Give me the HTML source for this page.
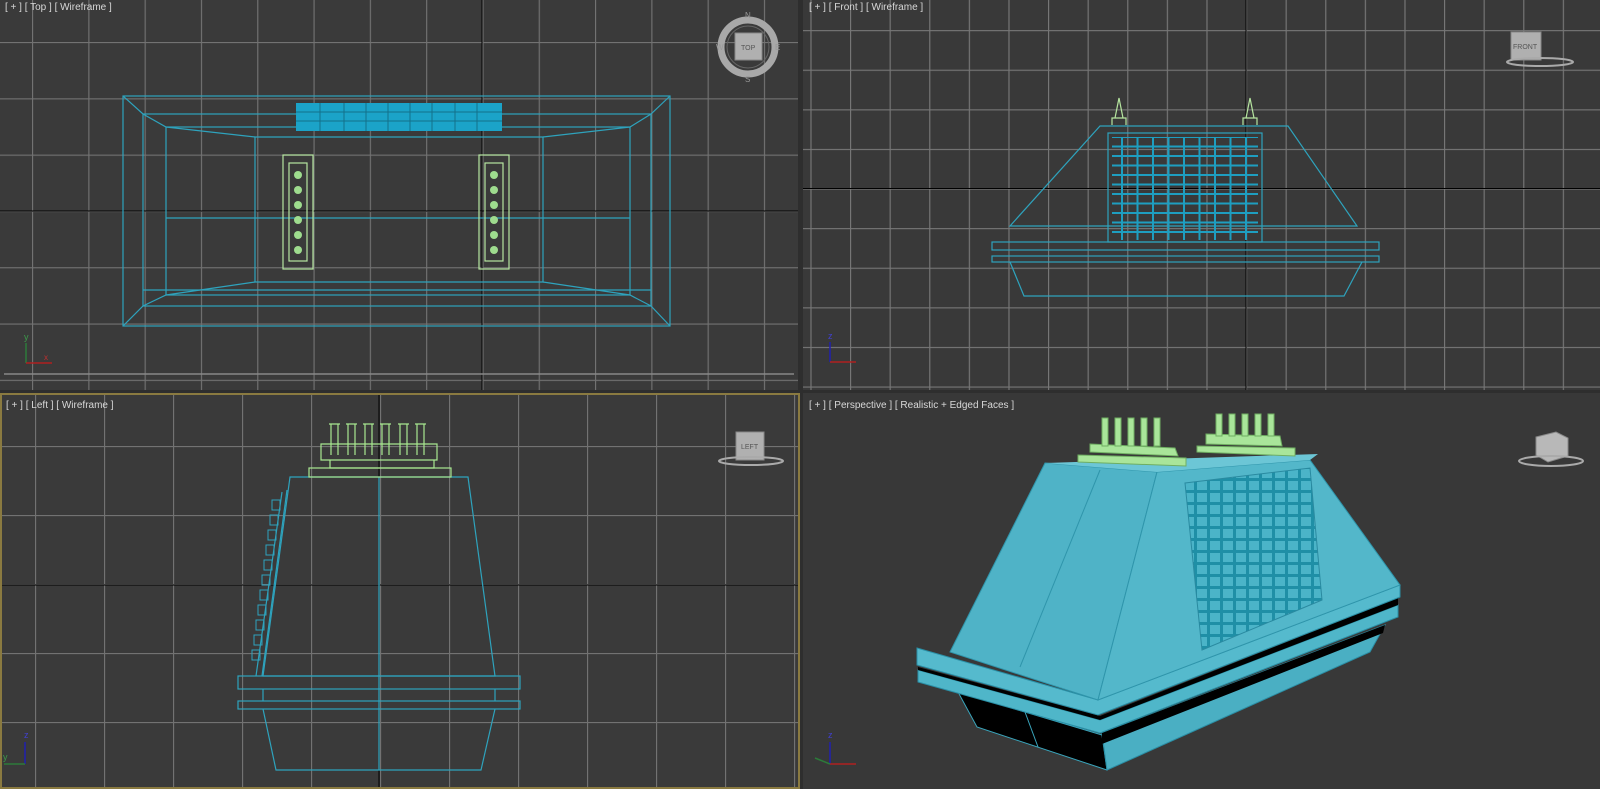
<!DOCTYPE html>
<html><head><meta charset="utf-8"><style>
html,body{margin:0;padding:0;background:#2e2e2e;width:1600px;height:789px;overflow:hidden}
svg{display:block}
text{font-family:"Liberation Sans",sans-serif;font-size:10px;fill:#d8d8d8}
</style></head><body>
<svg width="1600" height="789" viewBox="0 0 1600 789" xmlns="http://www.w3.org/2000/svg">
<defs>
<pattern id="gT" patternUnits="userSpaceOnUse" width="56.3" height="56.3" x="32" y="42"><path d="M0.5 0V56.3M0 0.5H56.3" stroke="#727272" stroke-width="1.3" fill="none"/></pattern>
<pattern id="gF" patternUnits="userSpaceOnUse" width="39.6" height="39.6" x="1246" y="188.5"><path d="M0.5 0V39.6M0 0.5H39.6" stroke="#777" stroke-width="1.3" fill="none"/></pattern>
<pattern id="gL" patternUnits="userSpaceOnUse" width="69" height="69" x="35" y="32"><path d="M0.5 0V69M0 0.5H69" stroke="#727272" stroke-width="1.3" fill="none"/></pattern>
<pattern id="tile" patternUnits="userSpaceOnUse" width="13" height="12"><rect width="13" height="12" fill="#1f8fa6"/><rect x="1" y="1" width="10" height="9" fill="#4bb4c8"/></pattern>
<pattern id="ftile" patternUnits="userSpaceOnUse" width="15.5" height="9.5" x="1091" y="137"><rect width="15.5" height="9.5" fill="none" stroke="#1e9ec0" stroke-width="2"/></pattern>
<clipPath id="cT"><rect x="0" y="0" width="798" height="390"/></clipPath>
<clipPath id="cF"><rect x="803" y="0" width="797" height="390"/></clipPath>
<clipPath id="cL"><rect x="0" y="393" width="800" height="396"/></clipPath>
</defs>

<!-- TOP viewport -->
<rect x="0" y="0" width="798" height="390" fill="#3a3a3a"/>
<rect x="0" y="0" width="798" height="390" fill="url(#gT)"/>
<g clip-path="url(#cT)">
<path d="M482 0V390M0 211H798" stroke="#000" stroke-width="1"/>
<g fill="none" stroke="#2ea3bd" stroke-width="1.2">
<rect x="123" y="96" width="547" height="230"/>
<rect x="143" y="114" width="508" height="192"/>
<rect x="166" y="127" width="464" height="168"/>
<path d="M123 96L143 114L166 127L255 137M670 96L651 114L630 127L543 137M123 326L143 306L166 295L255 282M670 326L651 306L630 295L543 282"/>
<path d="M255 137H543V282H255ZM255 137V282M543 137V282M166 218H630M143 290H651"/>
</g>
<rect x="296" y="103" width="206" height="28" fill="#1ba3c8"/>
<g stroke="#13708a" stroke-width="1"><path d="M320 103V131M344 103V131M366 103V131M388 103V131M410 103V131M432 103V131M455 103V131M477 103V131M296 112H502M296 121H502"/></g>
<g fill="none" stroke="#b6e6a0" stroke-width="1.2">
<rect x="283" y="155" width="30" height="114"/><rect x="289" y="163" width="18" height="98"/>
<rect x="479" y="155" width="30" height="114"/><rect x="485" y="163" width="18" height="98"/>
</g>
<g fill="#9edc8e"><circle cx="298" cy="175" r="4"/><circle cx="298" cy="190" r="4"/><circle cx="298" cy="205" r="4"/><circle cx="298" cy="220" r="4"/><circle cx="298" cy="235" r="4"/><circle cx="298" cy="250" r="4"/>
<circle cx="494" cy="175" r="4"/><circle cx="494" cy="190" r="4"/><circle cx="494" cy="205" r="4"/><circle cx="494" cy="220" r="4"/><circle cx="494" cy="235" r="4"/><circle cx="494" cy="250" r="4"/></g>
<circle cx="748" cy="47" r="27" fill="none" stroke="#a8a8a8" stroke-width="7"/>
<circle cx="748" cy="47" r="21" fill="none" stroke="#666" stroke-width="1"/>
<rect x="735" y="33" width="27" height="27" fill="#b0b0b0" stroke="#888"/>
<text x="741" y="50" style="font-size:7px;fill:#555">TOP</text>
<text x="745" y="18" style="font-size:8px;fill:#999">N</text><text x="745" y="82" style="font-size:8px;fill:#999">S</text>
<text x="716" y="50" style="font-size:8px;fill:#999">W</text><text x="775" y="50" style="font-size:8px;fill:#999">E</text>
<path d="M26 363V343" stroke="#2c7a3a" stroke-width="1.5"/><path d="M26 363H52" stroke="#b02020" stroke-width="1.5"/>
<text x="24" y="340" style="fill:#3c9a4a;font-size:9px">y</text><text x="44" y="360" style="fill:#c03030;font-size:8px">x</text>
<path d="M4 374H794" stroke="#888" stroke-width="1.5"/>
</g>
<text x="5" y="10">[ + ] [ Top ] [ Wireframe ]</text>

<!-- FRONT viewport -->
<rect x="803" y="0" width="797" height="390" fill="#393939"/>
<rect x="803" y="0" width="797" height="390" fill="url(#gF)"/>
<g clip-path="url(#cF)">
<path d="M1246 0V390M803 188.5H1600" stroke="#000" stroke-width="1"/>
<g fill="none" stroke="#2ea3bd" stroke-width="1.2">
<path d="M1100 126H1288L1357 226H1010Z"/>
<rect x="1108" y="133" width="154" height="109"/>
<rect x="992" y="242" width="387" height="8"/><rect x="992" y="256" width="387" height="6"/>
<path d="M1010 262L1024 296H1344L1362 262"/>
</g>
<rect x="1112" y="137" width="146" height="103" fill="url(#ftile)"/>
<g fill="none" stroke="#b6e6a0" stroke-width="1.2">
<path d="M1112 125V118H1126V125M1115 118L1119 98L1123 118"/><path d="M1243 125V118H1257V125M1246 118L1250 98L1254 118"/>
</g>
<rect x="1511" y="32" width="30" height="28" fill="#b0b0b0" stroke="#888"/>
<text x="1513" y="49" style="font-size:7px;fill:#555">FRONT</text>
<ellipse cx="1540" cy="62" rx="33" ry="4" fill="none" stroke="#aaa" stroke-width="2"/>
<path d="M830 362V342" stroke="#2020b0" stroke-width="1.5"/><path d="M830 362H856" stroke="#b02020" stroke-width="1.5"/>
<text x="828" y="339" style="fill:#4040d0;font-size:9px">z</text>
</g>
<text x="809" y="10">[ + ] [ Front ] [ Wireframe ]</text>

<!-- LEFT viewport -->
<rect x="0" y="393" width="800" height="396" fill="#3a3a3a"/>
<rect x="0" y="393" width="800" height="396" fill="url(#gL)"/>
<g clip-path="url(#cL)">
<path d="M379 393V789M0 585H800" stroke="#000" stroke-width="1"/>
<g fill="none" stroke="#2ea3bd" stroke-width="1.2">
<path d="M290 477H468L495 676H263Z"/><path d="M379 477V770"/>
<rect x="238" y="676" width="282" height="13"/><rect x="238" y="701" width="282" height="8"/>
<path d="M263 689V701M495 689V701M263 709L276 770H481L495 709"/>
<path d="M287 490L262 676M282 492L256 676"/>
</g>
<g fill="none" stroke="#2ea3bd" stroke-width="1"><path d="M272 500h8v10h-8zM270 515h8v10h-8zM268 530h8v10h-8zM266 545h8v10h-8zM264 560h8v10h-8zM262 575h8v10h-8zM260 590h8v10h-8zM258 605h8v10h-8zM256 620h8v10h-8zM254 635h8v10h-8zM252 650h8v10h-8z"/></g>
<g fill="none" stroke="#a8e890" stroke-width="1.2">
<rect x="309" y="468" width="142" height="9"/><path d="M330 460H434V468H330ZM321 444H437V460H321Z"/>
<path d="M331 424V455M338 424V455M348 424V455M355 424V455M365 424V455M372 424V455M382 424V455M389 424V455M400 424V455M407 424V455M417 424V455M424 424V455"/>
<path d="M329 424H340M346 424H357M363 424H374M380 424H391M398 424H409M415 424H426"/>
</g>
<rect x="736" y="432" width="28" height="28" fill="#b0b0b0" stroke="#888"/>
<text x="741" y="449" style="font-size:7px;fill:#555">LEFT</text>
<ellipse cx="751" cy="461" rx="32" ry="4" fill="none" stroke="#aaa" stroke-width="2"/>
<path d="M25 764V742" stroke="#2020b0" stroke-width="1.5"/><path d="M25 764H4" stroke="#2c7a3a" stroke-width="1.5"/>
<text x="24" y="738" style="fill:#4040d0;font-size:9px">z</text><text x="3" y="760" style="fill:#3c9a4a;font-size:9px">y</text>
</g>
<rect x="1" y="394" width="798" height="394" fill="none" stroke="#8a7a40" stroke-width="2"/>
<text x="6" y="408">[ + ] [ Left ] [ Wireframe ]</text>

<!-- PERSPECTIVE viewport -->
<rect x="803" y="393" width="797" height="396" fill="#383838"/>
<!-- hull -->
<polygon points="958,692 1102,735 1107,770 977,727" fill="#000" stroke="#3aa6bd"/>
<path d="M1025 712L1038 747" stroke="#3aa6bd"/>
<polygon points="1102,733 1385,625 1370,652 1107,770" fill="#4aafc3" stroke="#2a8fa6"/>
<polygon points="1102,733 1385,625 1383,633 1102,744" fill="#000"/>
<!-- lip 2 -->
<polygon points="918,670 1100,720 1398,605 1398,617 1100,733 918,682" fill="#4fb6c9" stroke="#2a8fa6"/>
<polygon points="918,667 1100,716 1398,598 1398,605 1100,720 918,670" fill="#000"/>
<!-- lip 1 -->
<polygon points="917,648 1098,700 1400,585 1400,597 1098,715 917,665" fill="#55bacd" stroke="#2a8fa6"/>
<!-- body -->
<polygon points="1045,463 1157,472 1098,700 950,652" fill="#4fb3c7" stroke="#2f95ab"/>
<polygon points="1157,472 1310,460 1400,585 1098,700" fill="#53b7ca" stroke="#2f95ab"/>
<polygon points="1045,463 1318,454 1310,460 1157,472" fill="#6cc6d6"/>
<path d="M1100 470L1020 667" stroke="#2f95ab" fill="none"/>
<polygon points="1185,483 1310,468 1322,600 1202,650" fill="url(#tile)" stroke="#2a8aa0"/>
<g fill="#a9e59a" stroke="#6fae62">
<polygon points="1078,455 1186,458 1186,466 1078,462"/><polygon points="1090,444 1175,448 1178,456 1090,452"/>
<rect x="1102" y="418" width="6" height="28"/><rect x="1115" y="418" width="6" height="28"/><rect x="1128" y="418" width="6" height="28"/><rect x="1141" y="418" width="6" height="28"/><rect x="1154" y="418" width="6" height="28"/>
<polygon points="1197,446 1295,448 1295,456 1197,452"/><polygon points="1206,434 1280,436 1282,446 1206,444"/>
<rect x="1216" y="414" width="6" height="22"/><rect x="1229" y="414" width="6" height="22"/><rect x="1242" y="414" width="6" height="22"/><rect x="1255" y="414" width="6" height="22"/><rect x="1268" y="414" width="6" height="22"/>
</g>
<polygon points="1536,437 1556,432 1568,438 1568,456 1548,462 1536,455" fill="#b8b8b8" stroke="#888"/>
<ellipse cx="1551" cy="461" rx="32" ry="5" fill="none" stroke="#aaa" stroke-width="2"/>
<path d="M830 764V742" stroke="#2020b0" stroke-width="1.5"/><path d="M830 764H856" stroke="#b02020" stroke-width="1.5"/><path d="M830 764L815 758" stroke="#2c7a3a" stroke-width="1.5"/>
<text x="828" y="738" style="fill:#4040d0;font-size:9px">z</text>
<text x="809" y="408">[ + ] [ Perspective ] [ Realistic + Edged Faces ]</text>
</svg>
</body></html>
